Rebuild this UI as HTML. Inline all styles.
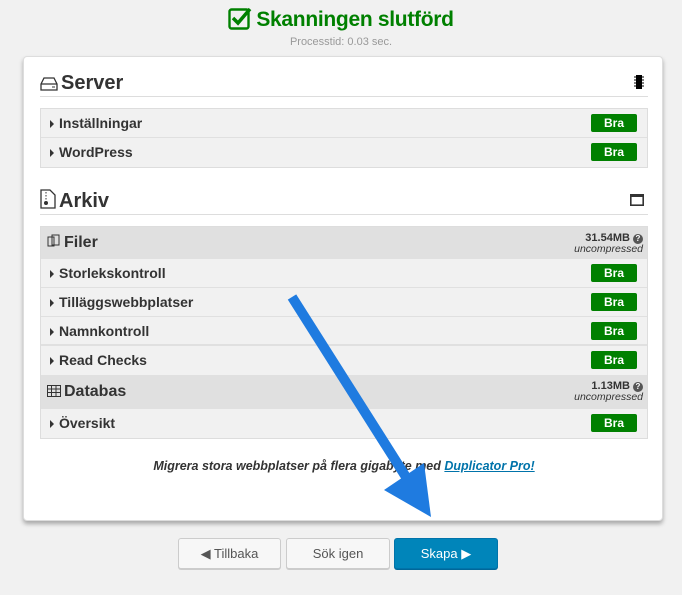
<!DOCTYPE html>
<html><head><meta charset="utf-8"><style>
*{box-sizing:border-box;margin:0;padding:0}
body{width:682px;height:595px;background:#f1f1f1;font-family:"Liberation Sans",sans-serif;position:relative;overflow:hidden;color:#333}
.title{position:absolute;top:6px;left:0;width:682px;text-align:center;color:#008000;font-weight:bold;font-size:21px;letter-spacing:-0.3px}
.title svg{vertical-align:-4px;margin-right:4px}
.sub{position:absolute;top:36px;width:682px;text-align:center;color:#999;font-size:11px}
.card{position:absolute;left:23px;top:56px;width:640px;height:465px;background:#fff;border:1px solid #ddd;border-radius:4px;box-shadow:0 3px 4px rgba(0,0,0,.3)}
.h{position:absolute;left:16px;width:608px;font-weight:bold;font-size:20px;border-bottom:1px solid #ddd;height:27px;line-height:26px}
.h .ic{display:inline-block;vertical-align:-2px;margin-right:3px}
.tbl{position:absolute;left:16px;width:608px;border:1px solid #ddd;background:#f1f1f1}
.row{height:29px;border-bottom:1px solid #e0e0e0;position:relative;font-weight:bold;font-size:14px;line-height:28px;padding-left:9px}
.row:last-child{border-bottom:none}
.row:before{content:"";display:inline-block;border-left:4px solid #333;border-top:4px solid transparent;border-bottom:4px solid transparent;margin-right:5px;vertical-align:0}
.b{position:absolute;right:10px;top:5px;width:46px;height:18px;background:#008000;color:#fff;border-radius:2px;text-align:center;font-size:12px;line-height:18px}
.gh{background:#e0e0e0;position:relative;font-weight:bold;font-size:16px;padding-left:6px}
.sz{position:absolute;right:4px;top:6px;text-align:right;font-size:11px;font-weight:bold;line-height:11px}
.sz i{font-weight:normal;display:block;font-size:10.5px}
.q{display:inline-block;width:10px;height:10px;border-radius:50%;background:#555;color:#fff;font-size:8px;line-height:10px;text-align:center}
.promo{position:absolute;top:402px;left:0;width:640px;text-align:center;font-style:italic;font-weight:bold;font-size:12.5px;color:#333}
.promo a{color:#0073aa;text-decoration:underline}
.btn{position:absolute;top:538px;height:31px;border:1px solid #ccc;background:#f7f7f7;border-radius:3px;text-align:center;line-height:29px;font-size:13px;color:#555;box-shadow:0 1px 0 #ccc}
</style></head><body>
<div class="title"><svg width="24" height="24" viewBox="0 0 24 24"><rect x="1.5" y="3.5" width="19" height="19" rx="2" fill="none" stroke="#008000" stroke-width="2.4"/><path d="M5 12l5 5L22 3" fill="none" stroke="#008000" stroke-width="3.5"/></svg>Skanningen slutförd</div>
<div class="sub">Processtid: 0.03 sec.</div>
<div class="card">
<div class="h" style="top:13px"><svg class="ic" width="18" height="14" viewBox="0 0 18 14"><path d="M1 7l3-6h10l3 6v6H1z M1 7h16" fill="none" stroke="#333" stroke-width="1.3"/><rect x="12" y="9.5" width="3" height="1" fill="#333"/></svg>Server<svg style="position:absolute;right:4px;top:5px" width="10" height="14" viewBox="0 0 10 14"><rect x="2" y="0" width="6" height="14" fill="#000"/><path d="M0 2h10M0 5h10M0 8h10M0 11h10" stroke="#000" stroke-width="1"/></svg></div>
<div class="tbl" style="top:51px"><div class="row">Inställningar<span class="b">Bra</span></div><div class="row">WordPress<span class="b">Bra</span></div></div>
<div class="h" style="top:131px"><svg class="ic" width="16" height="20" viewBox="0 0 16 20"><path d="M1 1h9l5 5v13H1z" fill="none" stroke="#333" stroke-width="1.3"/><path d="M6 3v8" stroke="#333" stroke-dasharray="1.5 1.5"/><circle cx="6" cy="14" r="2" fill="#333"/></svg>Arkiv<svg style="position:absolute;right:4px;top:6px" width="14" height="12" viewBox="0 0 14 12"><rect x="0.8" y="0.8" width="12.4" height="10.4" fill="none" stroke="#333" stroke-width="1.6"/><rect x="0" y="0" width="14" height="3" fill="#333"/></svg></div>
<div class="tbl" style="top:169px">
<div class="gh" style="height:32px;line-height:32px"><svg class="ic" width="14" height="14" viewBox="0 0 14 14" style="vertical-align:-1px;margin-right:3px"><path d="M1 3h6v9H1zM5 1h7v10H5z" fill="none" stroke="#333"/></svg>Filer<div class="sz">31.54MB <span class="q">?</span><i>uncompressed</i></div></div>
<div class="row">Storlekskontroll<span class="b">Bra</span></div>
<div class="row">Tilläggswebbplatser<span class="b">Bra</span></div>
<div class="row" style="border-bottom:2px solid #e0e0e0">Namnkontroll<span class="b">Bra</span></div>
<div class="row" style="border-bottom:none">Read Checks<span class="b">Bra</span></div>
<div class="gh" style="height:34px;line-height:34px"><svg class="ic" width="14" height="12" viewBox="0 0 14 12" style="vertical-align:-1px;margin-right:3px"><rect x="0.5" y="0.5" width="13" height="11" fill="none" stroke="#333"/><path d="M0 4h14M0 7.5h14M4.5 0v12M9 0v12" stroke="#333"/></svg>Databas<div class="sz">1.13MB <span class="q">?</span><i>uncompressed</i></div></div>
<div class="row">Översikt<span class="b">Bra</span></div>
</div>
<div class="promo">Migrera stora webbplatser på flera gigabyte med <a>Duplicator Pro!</a></div>
</div>
<div class="btn" style="left:178px;width:103px">◀ Tillbaka</div>
<div class="btn" style="left:286px;width:104px">Sök igen</div>
<div class="btn" style="left:394px;width:104px;background:#0085ba;border-color:#0073aa;color:#fff;box-shadow:0 1px 0 #006799">Skapa ▶</div>
<svg style="position:absolute;left:0;top:0" width="682" height="595"><line x1="292" y1="297" x2="406" y2="477" stroke="#1f7be0" stroke-width="10"/><polygon points="384,490 424,463 431,517" fill="#1f7be0"/></svg>
</body></html>
